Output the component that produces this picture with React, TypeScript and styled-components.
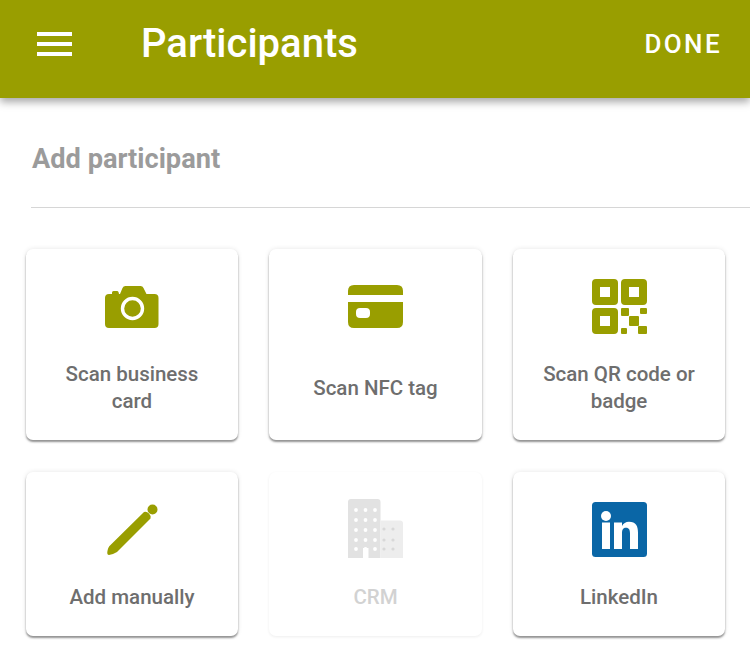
import React from 'react';
import styled, { createGlobalStyle } from 'styled-components';

const GlobalStyle = createGlobalStyle`
  html, body {
    margin: 0;
    padding: 0;
    background: #fff;
    font-family: Roboto, 'Liberation Sans', sans-serif;
  }
  body {
    overflow: hidden;
  }
`;

const Page = styled.div`
  width: 750px;
  height: 652px;
  background: #fff;
`;

const Toolbar = styled.header`
  display: flex;
  align-items: center;
  height: 98px;
  padding: 0 28px 10px 37px;
  box-sizing: border-box;
  background: #999e00;
  color: #fff;
  box-shadow: 0 4px 8px rgba(0, 0, 0, 0.35);
`;

const MenuButton = styled.div`
  display: flex;
  flex-direction: column;
  gap: 5.5px;
  width: 35px;
  span {
    display: block;
    height: 4.5px;
    background: #fff;
  }
`;

const Title = styled.h1`
  flex: 1;
  margin: 0 0 0 69px;
  font-size: 40px;
  font-weight: 500;
  line-height: 44px;
`;

const DoneButton = styled.div`
  font-size: 26px;
  font-weight: 500;
  letter-spacing: 2.4px;
`;

const SearchRow = styled.div`
  margin-left: 31px;
  height: 110px;
  box-sizing: border-box;
  padding: 44px 0 0 1px;
  border-bottom: 1px solid #d6d6d6;
  font-size: 27.2px;
  font-weight: 700;
  line-height: 34px;
  color: #9b9b9b;
`;

const Grid = styled.div`
  display: grid;
  grid-template-columns: 212px 213px 212px;
  column-gap: 31px;
  row-gap: 32px;
  padding: 41px 0 0 26px;
`;

const Card = styled.div<{ $disabled?: boolean }>`
  display: flex;
  flex-direction: column;
  align-items: center;
  padding: 30px 20px 25px;
  box-sizing: border-box;
  background: #fff;
  border-radius: 7px;
  color: ${(p) => (p.$disabled ? '#e2e2e2' : '#999e00')};
  box-shadow: ${(p) =>
    p.$disabled
      ? '0 1px 3px rgba(0, 0, 0, 0.07)'
      : '0 2px 2px rgba(0, 0, 0, 0.4), 0 0 5px rgba(0, 0, 0, 0.1)'};
`;

const IconSlot = styled.svg`
  display: block;
  width: 55px;
  height: 55px;
  overflow: visible;
  fill: currentColor;
`;

const Label = styled.div<{ $disabled?: boolean }>`
  flex: 1;
  display: flex;
  align-items: center;
  justify-content: center;
  margin-top: 27px;
  font-size: 20.5px;
  font-weight: 500;
  line-height: 27px;
  text-align: center;
  color: ${(p) => (p.$disabled ? '#d2d2d2' : '#6e6e6e')};
`;

const CameraIcon = () => (
  <IconSlot viewBox="0 0 55 55">
    <path d="M4 15h3v-1.5q0-1.5 1.5-1.5h3.5q1 0 1.5 1l.5 2h1l2.5-6q.8-2 3-2h15q2.2 0 3 2l3 6h8q4 0 4 4v26q0 4-4 4H4q-4 0-4-4V19q0-4 4-4z" />
    <circle cx="27.5" cy="29.5" r="10" fill="none" stroke="#fff" strokeWidth="3.4" />
  </IconSlot>
);

const NfcIcon = () => (
  <IconSlot viewBox="0 0 55 55">
    <path d="M6 6h43q6 0 6 6v4H0v-4q0-6 6-6z" />
    <path
      fillRule="evenodd"
      d="M0 23h55v20q0 6-6 6H6q-6 0-6-6zM12 29q-4 0-4 4v2q0 4 4 4h6q4 0 4-4v-2q0-4-4-4z"
    />
  </IconSlot>
);

const QrIcon = () => (
  <IconSlot viewBox="0 0 55 55">
    <path
      fillRule="evenodd"
      d="M4 0h18q4 0 4 4v18q0 4-4 4H4q-4 0-4-4V4q0-4 4-4zM8 8v10h10V8zM33 0h18q4 0 4 4v18q0 4-4 4H33q-4 0-4-4V4q0-4 4-4zM37 8v10h10V8zM4 29h18q4 0 4 4v18q0 4-4 4H4q-4 0-4-4V33q0-4 4-4zM8 37v10h10V37z"
    />
    <rect x="29" y="29" width="8" height="8" rx="1" />
    <rect x="48" y="29" width="7" height="6" rx="1" />
    <rect x="37" y="37" width="10" height="10" rx="1" />
    <rect x="46" y="47" width="9" height="8" rx="1" />
    <rect x="29" y="49" width="6" height="6" rx="1" />
  </IconSlot>
);

const PencilIcon = () => (
  <IconSlot viewBox="0 0 55 55">
    <circle cx="47.5" cy="7.5" r="5" />
    <path d="M39 10Q41.5 9 44 11.5Q46.5 14 45.5 16.5L12 50Q8 52.5 4 53Q2 53 2.3 50Q3 45 5 43.5Z" />
  </IconSlot>
);

const BIG_COLS = [8, 17.5, 27];
const BIG_ROWS = [8, 18, 28, 38, 47];
const SMALL_COLS = [36, 45];
const SMALL_ROWS = [27, 38, 47];

const BuildingIcon = () => (
  <IconSlot viewBox="0 0 55 55">
    <path d="M3 -3h26.5q3 0 3 3v56H20.5V46h-5.5v10H0V0q0-3 3-3z" />
    <path d="M32.5 18.5H52q3 0 3 3V56H32.5z" fill="#ededed" />
    {BIG_ROWS.map((y) =>
      BIG_COLS.map((x) => (
        <circle key={`${x}-${y}`} cx={x} cy={y} r="1.9" fill="#fff" />
      )),
    )}
    {SMALL_ROWS.map((y) =>
      SMALL_COLS.map((x) => (
        <circle key={`${x}-${y}`} cx={x} cy={y} r="1.6" fill="#d8d8d8" />
      )),
    )}
  </IconSlot>
);

const LinkedInIcon = () => (
  <IconSlot viewBox="0 0 55 55">
    <rect width="55" height="55" rx="3.5" fill="#0a66a6" />
    <circle cx="14" cy="14" r="5" fill="#fff" />
    <rect x="10" y="20.5" width="8" height="26.5" fill="#fff" />
    <path
      fill="#fff"
      d="M22 20.5h8v3.5c1.2-2.2 3.8-4.2 7-4.2c7 0 9 4.5 9 10.7V47h-8V31.5c0-3.5-.8-5.8-4-5.8c-3.4 0-4 2.6-4 5.8V47h-8z"
    />
  </IconSlot>
);

const actions = [
  { label: 'Scan business card', icon: <CameraIcon /> },
  { label: 'Scan NFC tag', icon: <NfcIcon /> },
  { label: 'Scan QR code or badge', icon: <QrIcon /> },
  { label: 'Add manually', icon: <PencilIcon /> },
  { label: 'CRM', icon: <BuildingIcon />, disabled: true },
  { label: 'LinkedIn', icon: <LinkedInIcon /> },
];

export default () => {
  return (
    <Page>
      <GlobalStyle />
      <Toolbar>
        <MenuButton>
          <span />
          <span />
          <span />
        </MenuButton>
        <Title>Participants</Title>
        <DoneButton>DONE</DoneButton>
      </Toolbar>
      <SearchRow>Add participant</SearchRow>
      <Grid>
        {actions.map((action) => (
          <Card key={action.label} $disabled={action.disabled}>
            {action.icon}
            <Label $disabled={action.disabled}>{action.label}</Label>
          </Card>
        ))}
      </Grid>
    </Page>
  );
};
